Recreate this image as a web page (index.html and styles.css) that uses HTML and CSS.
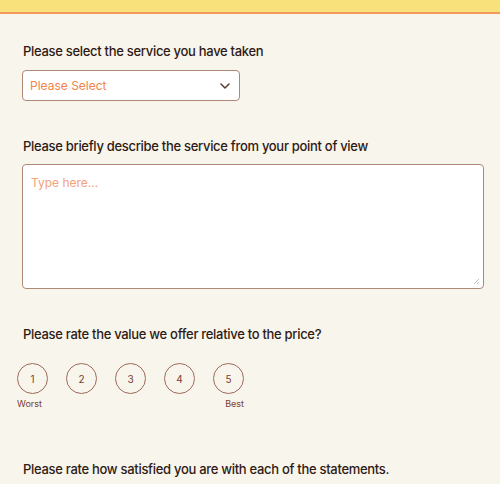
FILE: index.html
```html
<!DOCTYPE html>
<html>
<head>
<meta charset="utf-8">
<link rel="stylesheet" href="styles.css">
</head>
<body>
<div class="topbar"></div>
<main class="form">
  <section class="q">
    <label class="label">Please select the service you have taken</label>
    <div class="select">
      <span class="select-text">Please Select</span>
      <svg class="chev" width="10" height="6" viewBox="0 0 10 6"><path d="M1 1l4 4 4-4" fill="none" stroke="#5a3a30" stroke-width="1.5" stroke-linecap="round" stroke-linejoin="round"/></svg>
    </div>
  </section>
  <section class="q">
    <label class="label">Please briefly describe the service from your point of view</label>
    <div class="textarea">
      <span class="placeholder">Type here...</span>
      <svg class="grip" width="8" height="8" viewBox="0 0 8 8"><path d="M7 2L2 7M7 5L5 7" stroke="#c8bfb5" stroke-width="1"/></svg>
    </div>
  </section>
  <section class="q q-rating">
    <label class="label">Please rate the value we offer relative to the price?</label>
    <div class="rating">
      <div class="circles">
        <span class="circle">1</span>
        <span class="circle">2</span>
        <span class="circle">3</span>
        <span class="circle">4</span>
        <span class="circle">5</span>
      </div>
      <div class="ends"><span>Worst</span><span>Best</span></div>
    </div>
  </section>
  <section class="q q-last">
    <label class="label">Please rate how satisfied you are with each of the statements.</label>
  </section>
</main>
</body>
</html>
```
FILE: styles.css
```css
html, body {
  margin: 0;
  padding: 0;
  background: #f7f5ec;
  font-family: Inter, "Noto Sans", sans-serif;
}
.topbar {
  height: 12px;
  background: #f8e07a;
  border-bottom: 2px solid #f29a5e;
}
.form {
  padding: 27px 16px 0 22px;
}
.q {
  margin-bottom: 35px;
}
.q-rating {
  margin-bottom: 49px;
}
.q-last {
  margin-bottom: 0;
}
.label {
  display: block;
  font-size: 13px;
  line-height: 20px;
  color: #2f1a14;
  padding-left: 1px;
  font-weight: 500;
  letter-spacing: -0.3px;
}
.select {
  margin-top: 9px;
  height: 29px;
  width: 200px;
  border: 1px solid #b08878;
  border-radius: 4px;
  background: #fff;
  display: flex;
  align-items: center;
  justify-content: space-between;
  padding: 0 9px 0 7px;
}
.select-text {
  color: #f0844a;
  font-size: 12px;
}
.chev { display: block; }
.textarea {
  margin-top: 8px;
  height: 123px;
  width: 460px;
  border: 1px solid #b08878;
  border-radius: 4px;
  background: #fff;
  position: relative;
}
.placeholder {
  position: absolute;
  left: 8px;
  top: 10px;
  color: #f3a17c;
  font-size: 12px;
}
.grip {
  position: absolute;
  right: 3px;
  bottom: 3px;
}
.rating {
  margin-top: 19px;
  margin-left: -5px;
  width: 227px;
}
.circles {
  display: flex;
  gap: 18px;
}
.circle {
  width: 29px;
  height: 29px;
  border: 1px solid #a06a5c;
  border-radius: 50%;
  display: flex;
  align-items: center;
  justify-content: center;
  font-size: 10px;
  color: #7a3e30;
}
.ends {
  display: flex;
  justify-content: space-between;
  font-size: 9px;
  line-height: 12px;
  color: #7a3e30;
  margin-top: 4px;
}
```
